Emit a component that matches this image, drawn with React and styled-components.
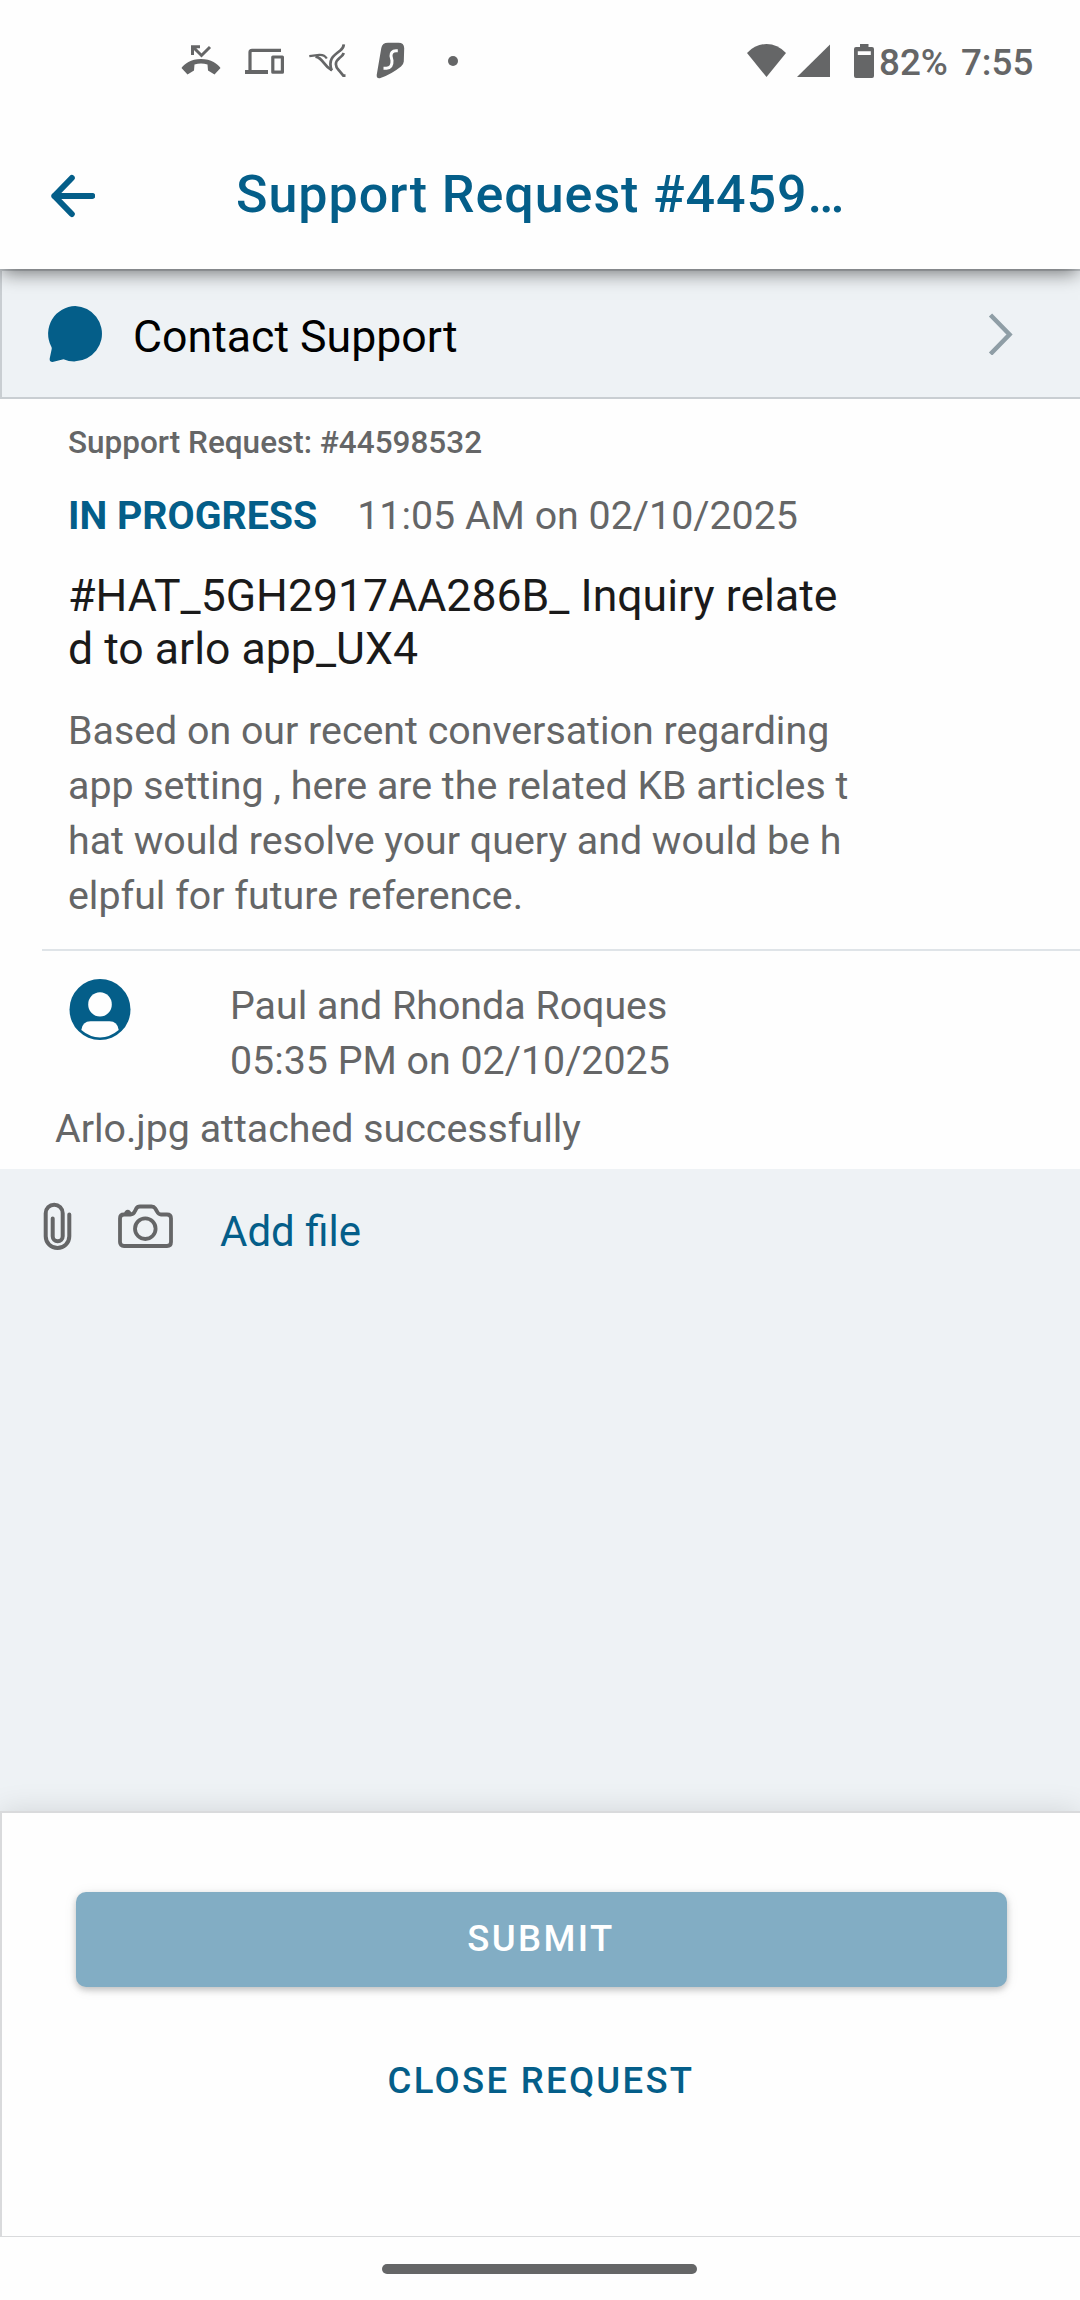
import React from "react";
import styled, { createGlobalStyle, css } from "styled-components";

const blue = "#045e89";
const grey = "#656667";

const StatusBar = () => (
  <StatusWrapper>
    <Notifications>
      {/* missed call */}
      <svg width="40" height="34" viewBox="0 0 40 34" fill={grey}>
        <path d="M20 15 C30 15 37 20 39.5 24 L33.5 30.5 L27 26.5 L26.5 20.5 Q20 18.5 13.5 20.5 L13 26.5 L6.5 30.5 L0.5 24 C3 20 10 15 20 15Z" />
        <path
          d="M11.5 11 V2.7 H19 M12 3 L20.5 11.5 L29 3"
          fill="none"
          stroke={grey}
          strokeWidth="3"
        />
      </svg>
      {/* connected devices */}
      <svg width="40" height="28" viewBox="0 0 40 28" fill="none" stroke={grey}>
        <path d="M36 3.3 H7 Q5 3.3 5 5.3 V24" strokeWidth="3.2" />
        <path d="M0 25 H23" strokeWidth="4" />
        <rect
          x="27.8"
          y="10"
          width="9.6"
          height="15.2"
          strokeWidth="3.2"
          strokeLinejoin="round"
        />
      </svg>
      {/* arlo bird */}
      <svg width="43" height="36" viewBox="0 0 43 36" fill="none" stroke={grey}>
        <path d="M0.3 13.2 L10.3 11.8 Q15.5 11.5 17.8 15.5" strokeWidth="2.2" />
        <path
          d="M6.5 13.6 Q11 14.5 14.3 19.3 Q18 24.5 23 27.3"
          strokeWidth="2.8"
        />
        <path
          d="M34.8 1.3 Q34.5 5 31 7.7 C24 13 19 16.5 22.6 27.5"
          strokeWidth="2.7"
        />
        <path
          d="M34.8 10 Q34 12.5 30.5 15 C25.5 19 26 23.5 30 27.5 L34.3 32.7 H36.5"
          strokeWidth="2.7"
        />
      </svg>
      {/* vpn shield */}
      <svg width="30" height="38" viewBox="0 0 30 38" fill={grey}>
        <path d="M5.3 6 Q6.2 0.7 12 0.7 H22.5 Q28 0.7 28.2 6 L27.8 19.5 Q27.5 22.5 25 24.5 Q15 32.5 4.5 36 Q0.5 37 0.7 33Z" />
        <path
          d="M21.8 8.8 H20 Q14.8 9.2 15 14 L16 18.5 Q16.5 25.8 10.5 26.2 H7.5"
          fill="none"
          stroke="#fefefe"
          strokeWidth="3"
        />
      </svg>
      <Dot />
    </Notifications>
    <System>
      <svg width="128" height="36" viewBox="0 0 128 36" fill={grey}>
        <path d="M0 10 Q8.5 1 19.5 1 Q30.5 1 39 10 L19.5 34Z" />
        <path d="M50 34 H83 V1.5Z" />
        <path
          fillRule="evenodd"
          d="M113 1 h8.5 v3 h3.5 q2 0 2 2 v27 q0 2 -2 2 h-16 q-2 0 -2 -2 v-27 q0 -2 2 -2 h4z M110.8 8.2 v3.8 h13 v-3.8z"
        />
      </svg>
      <Percent>82%</Percent>
      <Clock>7:55</Clock>
    </System>
  </StatusWrapper>
);

const App = () => (
  <Screen>
    <GlobalStyle />
    <StatusBar />
    <Header>
      <svg
        width="46"
        height="44"
        viewBox="0 0 46 44"
        fill="none"
        stroke={blue}
        strokeWidth="6"
        strokeLinecap="round"
        strokeLinejoin="round"
      >
        <path d="M43.3 22 H5.3 M22.8 4 L5.3 22 L22.8 40" />
      </svg>
      <HeaderTitle>Support Request #4459…</HeaderTitle>
    </Header>
    <ContactRow>
      <svg width="56" height="56" viewBox="0 0 56 56" fill={blue}>
        <path d="M28.3 0 a27.7 27.7 0 1 1 -11.8 53.2 L5.5 56 Q2.3 56 2.7 52.5 L4.7 43 Q5 41.5 4 40 A27.7 27.7 0 0 1 28.3 0Z" />
      </svg>
      <ContactLabel>Contact Support</ContactLabel>
      <svg
        width="26"
        height="42"
        viewBox="0 0 26 42"
        fill="none"
        stroke="#8f9ea6"
        strokeWidth="4.5"
      >
        <path d="M2.5 2 L21.5 21.5 L2.5 41" />
      </svg>
    </ContactRow>
    <Request>
      <RequestNumber>Support Request: #44598532</RequestNumber>
      <StatusRow>
        <Status>IN PROGRESS</Status>
        <Time>11:05 AM on 02/10/2025</Time>
      </StatusRow>
      <Subject>
        #HAT_5GH2917AA286B_ Inquiry relate
        <br />d to arlo app_UX4
      </Subject>
      <Body>
        Based on our recent conversation regarding
        <br />
        app setting , here are the related KB articles t<br />
        hat would resolve your query and would be h<br />
        elpful for future reference.
      </Body>
    </Request>
    <Comment>
      <Author>
        <svg width="62" height="62" viewBox="0 0 62 62">
          <circle cx="31" cy="30.5" r="30.5" fill={blue} />
          <ellipse cx="31" cy="25.4" rx="11.8" ry="12.2" fill="#fefefe" />
          <path
            d="M12.3 51 Q13.5 42.3 21.5 42.3 H40.5 Q48.5 42.3 49.7 51 Q41 58.4 31 58.4 Q21 58.4 12.3 51Z"
            fill="#fefefe"
          />
        </svg>
        <AuthorText>
          Paul and Rhonda Roques
          <br />
          05:35 PM on 02/10/2025
        </AuthorText>
      </Author>
      <Attachment>Arlo.jpg attached successfully</Attachment>
    </Comment>
    <AddFile>
      <svg
        width="30"
        height="50"
        viewBox="0 0 30 50"
        fill="none"
        stroke={grey}
        strokeWidth="4"
        strokeLinecap="round"
      >
        <path d="M26.3 12.5 V34.2 a11.8 11.8 0 0 1 -23.6 0 V11.2 a8.5 8.5 0 0 1 17 0 V34.3 a5 5 0 0 1 -10 0 V16.5" />
      </svg>
      <CameraIcon
        width="56"
        height="46"
        viewBox="0 0 56 46"
        fill="none"
        stroke={grey}
        strokeWidth="3.8"
      >
        <path d="M6 10.5 H12.5 Q15.5 10.5 17 7 L18.3 4.5 Q19.3 2.5 22 2.5 H33.5 Q36 2.5 37.3 4.5 L39 7.5 Q40.5 10.5 43 10.5 H49 Q53 10.5 53 14.5 V38 Q53 42 49 42 H6 Q2 42 2 38 V14.5 Q2 10.5 6 10.5Z" />
        <circle cx="27.3" cy="24.7" r="10.3" />
        <path
          d="M6 9.5 Q7 5.8 9.7 5.8 Q12.5 5.8 13.5 9.5Z"
          fill={grey}
          stroke="none"
        />
      </CameraIcon>
      <AddFileLabel>Add file</AddFileLabel>
    </AddFile>
    <Actions>
      <Submit>SUBMIT</Submit>
      <CloseRequest>CLOSE REQUEST</CloseRequest>
    </Actions>
    <HomeArea>
      <HomeBar />
    </HomeArea>
  </Screen>
);

const GlobalStyle = createGlobalStyle`
  body {
    margin: 0;
  }
`;

const bodyText = css`
  font-size: 39.35px;
  line-height: 55px;
`;

const Screen = styled.div`
  display: flex;
  flex-direction: column;
  width: 1080px;
  height: 2300px;
  overflow: hidden;
  background: #fefefe;
  font-family: Roboto, "Liberation Sans", sans-serif;
  color: ${grey};

  svg {
    flex: none;
    display: block;
  }
`;

const StatusWrapper = styled.div`
  box-sizing: border-box;
  display: flex;
  align-items: center;
  justify-content: space-between;
  height: 122px;
  padding-left: 181px;
`;

const Notifications = styled.div`
  display: flex;
  align-items: center;
  gap: 24px;
`;

const Dot = styled.div`
  width: 10px;
  height: 10px;
  border-radius: 50%;
  margin-left: 18px;
  background: ${grey};
`;

const System = styled.div`
  display: flex;
  align-items: center;
  width: 333px;
  font-size: 36.8px;
  font-weight: 500;
`;

const Percent = styled.div`
  margin: 2px 0 0 4px;
`;

const Clock = styled.div`
  margin: 2px 0 0 13px;
`;

const Header = styled.div`
  box-sizing: border-box;
  display: flex;
  align-items: center;
  height: 147px;
  padding-left: 49px;
  position: relative;
  box-shadow: 0 6px 18px -2px rgba(0, 0, 0, 0.52);
  clip-path: inset(0 0 -40px 0);
`;

const HeaderTitle = styled.div`
  margin: -2px 0 0 141px;
  font-size: 52px;
  font-weight: 500;
  letter-spacing: 0.95px;
  color: ${blue};
`;

const ContactRow = styled.div`
  box-sizing: border-box;
  display: flex;
  align-items: center;
  height: 130px;
  padding: 0 66px 0 45px;
  border: 2px solid #c9ced2;
  border-right: 0;
  background: #eef2f5;
`;

const ContactLabel = styled.div`
  flex: 1;
  margin: 6px 0 0 30px;
  font-size: 44.65px;
  color: #000;
`;

const Request = styled.div`
  box-sizing: border-box;
  padding: 26px 0 0 68px;
  height: 550px;
`;

const RequestNumber = styled.div`
  font-size: 31.5px;
  line-height: 36px;
  font-weight: 500;
`;

const StatusRow = styled.div`
  display: flex;
  gap: 40px;
  margin-top: 28px;
  ${bodyText}
`;

const Status = styled.div`
  font-weight: 700;
  color: ${blue};
`;

const Time = styled.div``;

const Subject = styled.div`
  margin-top: 26px;
  font-size: 44.6px;
  line-height: 53px;
  color: #1a1a1a;
  white-space: nowrap;
`;

const Body = styled.div`
  margin-top: 28px;
  white-space: nowrap;
  ${bodyText}
`;

const Comment = styled.div`
  box-sizing: border-box;
  height: 220px;
  margin-left: 42px;
  border-top: 2px solid #dfe4e8;
  ${bodyText}
`;

const Author = styled.div`
  display: flex;
  align-items: flex-start;
  gap: 99px;
  padding: 28px 0 0 27px;
`;

const AuthorText = styled.div``;

const Attachment = styled.div`
  margin: 13px 0 0 13px;
`;

const AddFile = styled.div`
  box-sizing: border-box;
  display: flex;
  align-items: flex-start;
  height: 642px;
  padding: 33px 0 0 43px;
  background: #eef2f5;
`;

const CameraIcon = styled.svg`
  margin: 2px 46px 0 45px;
`;

const AddFileLabel = styled.div`
  margin-top: 5px;
  font-size: 42px;
  color: ${blue};
`;

const Actions = styled.div`
  box-sizing: border-box;
  display: flex;
  flex-direction: column;
  align-items: center;
  height: 426px;
  padding-top: 79px;
  border: 2px solid #d9dadc;
  border-width: 2px 0 1px 2px;
  background: #fefefe;
  box-shadow: 0 0 28px rgba(0, 0, 0, 0.12);
  clip-path: inset(-40px 0 0 0);
`;

const Submit = styled.div`
  width: 931px;
  height: 95px;
  border-radius: 10px;
  background: #82adc4;
  box-shadow: 0 3px 6px rgba(0, 0, 0, 0.2), 0 2px 14px rgba(0, 0, 0, 0.08);
  color: #fff;
  text-align: center;
  font-size: 36.5px;
  font-weight: 500;
  line-height: 94px;
  letter-spacing: 2.4px;
`;

const CloseRequest = styled.div`
  margin-top: 72px;
  font-size: 36.5px;
  font-weight: 500;
  letter-spacing: 2.3px;
  color: ${blue};
`;

const HomeArea = styled.div`
  display: flex;
  justify-content: center;
  padding: 27px 1px 0 0;
`;

const HomeBar = styled.div`
  width: 315px;
  height: 10px;
  border-radius: 5px;
  background: ${grey};
`;

export default App;
